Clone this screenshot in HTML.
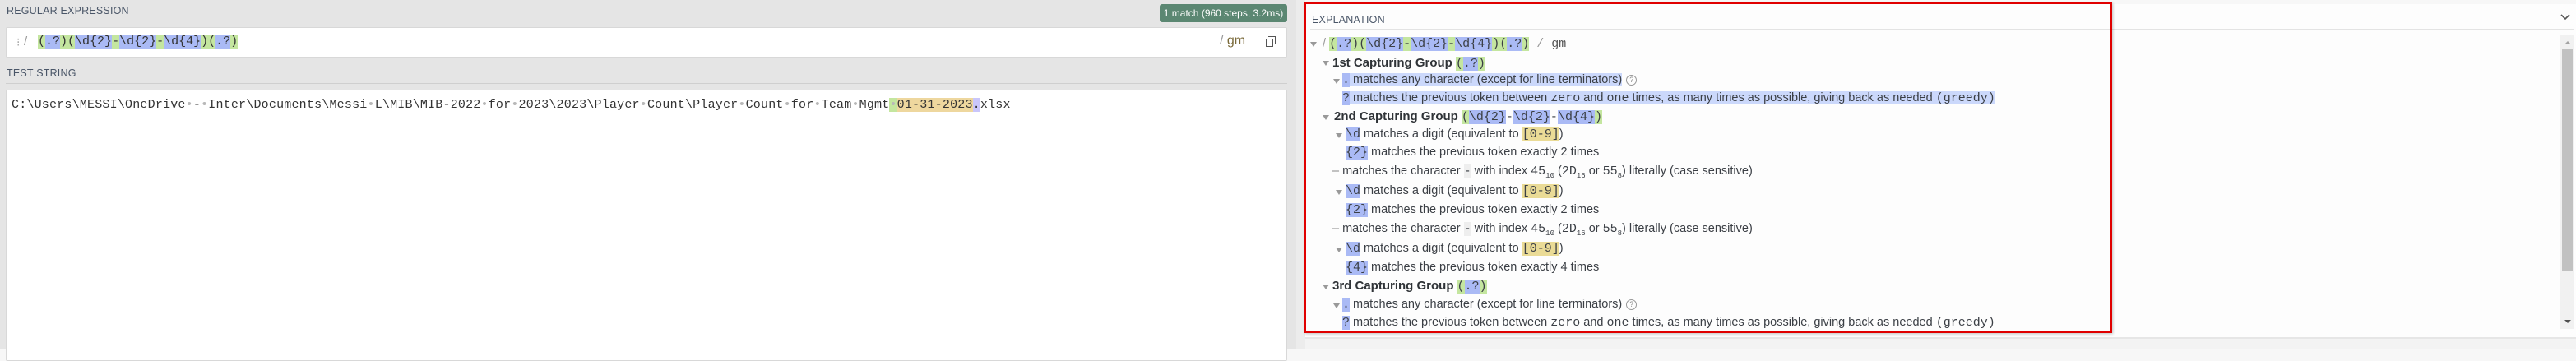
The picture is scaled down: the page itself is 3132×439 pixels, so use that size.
<!DOCTYPE html>
<html><head><meta charset="utf-8"><style>
*{margin:0;padding:0;box-sizing:border-box}
body{width:3132px;height:425px;overflow:hidden;background:#f7f7f7;font-family:"Liberation Sans",sans-serif;position:relative}
.abs{position:absolute}
.mono{font-family:"Liberation Mono",monospace}
.lbl{font-size:12.5px;color:#4a5668;letter-spacing:.2px}
.g{background:#c4e69f}.b{background:#aabaf5}.y{background:#eadb96}.p{background:#c9c6fb}.t{background:#eed79e}
.lb{background:#cbd8fb}
.dot{color:#b8b8b8}
.ex{position:absolute;font-size:14.5px;color:#3b3f45;white-space:nowrap;line-height:21px}
.ex .mono{font-size:15px}
.tri{position:absolute;width:0;height:0;border-left:4px solid transparent;border-right:4px solid transparent;border-top:6px solid #999}
.bold{font-weight:bold;font-size:15px;color:#2f3337}
.q{display:inline-block;width:13px;height:13px;border:1px solid #999;border-radius:50%;font-size:9px;text-align:center;line-height:11px;color:#888;vertical-align:middle;margin-left:5px}
sub{font-size:9px}
</style></head><body>
<div class="abs" style="left:0;top:0;width:1576px;height:425px;background:#e5e5e5"></div>
<div class="abs" style="left:1576px;top:0;width:11px;height:425px;background:#ececec"></div>
<div class="abs lbl" style="left:8px;top:6px">REGULAR EXPRESSION</div>
<div class="abs" style="left:7px;top:25px;width:1395px;height:1px;background:#cfcfcf"></div>
<div class="abs" style="left:1410px;top:5px;width:155px;height:22px;background:#5b8772;border-radius:3px;color:#fff;font-size:12px;line-height:22px;text-align:center">1 match (960 steps, 3.2ms)</div>
<div class="abs" style="left:7px;top:33px;width:1558px;height:37px;background:#fff;border:1px solid #d8d8d8;border-radius:2px"></div>
<div class="abs" style="left:1523px;top:34px;width:1px;height:35px;background:#e2e2e2"></div>
<div class="abs" style="left:20px;top:43px;font-size:14px;color:#aaa">⁝</div>
<div class="abs" style="left:29px;top:42px;font-size:15px;color:#999">/</div>
<div class="abs mono" style="left:46px;top:42px;font-size:15px;color:#333;line-height:18px;white-space:pre"><span class="g">(</span><span class="b">.?</span><span class="g">)(</span><span class="b">\d{2}</span><span class="g">-</span><span class="b">\d{2}</span><span class="g">-</span><span class="b">\d{4}</span><span class="g">)(</span><span class="b">.?</span><span class="g">)</span></div>
<div class="abs" style="left:1483px;top:41px;font-size:16px;color:#999">/ <span style="color:#7a6a3a">gm</span></div>
<div class="abs" style="left:1539px;top:47px;width:9px;height:10px;border:1.5px solid #555;background:#fff"></div>
<div class="abs" style="left:1542px;top:44px;width:9px;height:10px;border:1.5px solid #555;border-left:none;border-bottom:none"></div>
<div class="abs lbl" style="left:8px;top:82px">TEST STRING</div>
<div class="abs" style="left:7px;top:101px;width:1558px;height:1px;background:#cfcfcf"></div>
<div class="abs" style="left:7px;top:109px;width:1558px;height:330px;background:#fff;border:1px solid #d8d8d8;border-radius:2px"></div>
<div class="abs mono" style="left:14px;top:119px;font-size:15px;letter-spacing:.2px;color:#333;line-height:18px;white-space:pre">C:\Users\MESSI\OneDrive<span class="dot">•</span>-<span class="dot">•</span>Inter\Documents\Messi<span class="dot">•</span>L\MIB\MIB-2022<span class="dot">•</span>for<span class="dot">•</span>2023\2023\Player<span class="dot">•</span>Count\Player<span class="dot">•</span>Count<span class="dot">•</span>for<span class="dot">•</span>Team<span class="dot">•</span>Mgmt<span class="g dot">•</span><span class="t">01-31-2023</span><span class="p">.</span>xlsx</div>

<div class="abs" style="left:1587px;top:5px;width:1545px;height:405px;background:#fdfdfd"></div>
<div class="abs lbl" style="left:1595px;top:17px">EXPLANATION</div>
<div class="abs" style="left:1593px;top:35px;width:1537px;height:1px;background:#e3e3e3"></div>
<svg class="abs" style="left:3113px;top:17px" width="12" height="8"><path d="M1 1l5 5 5-5" stroke="#555" stroke-width="1.6" fill="none"/></svg>
<div class="abs" style="left:3113px;top:43px;width:17px;height:357px;background:#f1f1f1"></div>
<div class="abs" style="left:3115px;top:60px;width:13px;height:270px;background:#c1c1c1"></div>
<div class="abs" style="left:3118px;top:50px;border-left:4px solid transparent;border-right:4px solid transparent;border-bottom:4px solid #a3a3a3"></div>
<div class="abs" style="left:3118px;top:389px;border-left:4px solid transparent;border-right:4px solid transparent;border-top:4px solid #505050"></div>
<div class="abs" style="left:1587px;top:410px;width:1545px;height:15px;background:#f3f3f3"></div>
<div class="abs" style="left:1587px;top:410px;width:1545px;height:2px;background:#e6e6e6"></div>

<div class="tri" style="left:1593px;top:51px"></div>
<div class="ex" style="left:1608px;top:43px"><span style="color:#999">/</span> <span class="mono"><span class="g">(</span><span class="b">.?</span><span class="g">)(</span><span class="b">\d{2}</span><span class="g">-</span><span class="b">\d{2}</span><span class="g">-</span><span class="b">\d{4}</span><span class="g">)(</span><span class="b">.?</span><span class="g">)</span> <span style="color:#999">/</span> <span style="color:#555">gm</span></span></div>

<div class="tri" style="left:1608px;top:74px"></div>
<div class="ex" style="left:1620px;top:66px"><span class="bold">1st Capturing Group</span> <span class="mono"><span class="g">(</span><span class="b">.?</span><span class="g">)</span></span></div>
<div class="tri" style="left:1621px;top:96px"></div>
<div class="ex" style="left:1632px;top:87px"><span class="lb"><span class="mono b">.</span> matches any character (except for line terminators)</span><span class="q">?</span></div>
<div class="ex" style="left:1632px;top:109px"><span class="lb"><span class="mono b">?</span> matches the previous token between <span class="mono">zero</span> and <span class="mono">one</span> times, as many times as possible, giving back as needed <span class="mono">(greedy)</span></span></div>

<div class="tri" style="left:1608px;top:140px"></div>
<div class="ex" style="left:1622px;top:131px"><span class="bold">2nd Capturing Group</span> <span class="mono"><span class="g">(</span><span class="b">\d{2}</span>-<span class="b">\d{2}</span>-<span class="b">\d{4}</span><span class="g">)</span></span></div>
<div class="tri" style="left:1624px;top:162px"></div>
<div class="ex" style="left:1636px;top:153px"><span class="mono b">\d</span> matches a digit (equivalent to <span class="mono y">[0-9]</span>)</div>
<div class="ex" style="left:1636px;top:175px"><span class="mono b">{2}</span> matches the previous token exactly 2 times</div>
<div class="ex" style="left:1620px;top:198px"><span style="color:#888">–</span> matches the character <span class="mono" style="background:#eee">-</span> with index <span class="mono">45<sub>10</sub></span> (<span class="mono">2D<sub>16</sub></span> or <span class="mono">55<sub>8</sub></span>) literally (case sensitive)</div>
<div class="tri" style="left:1624px;top:231px"></div>
<div class="ex" style="left:1636px;top:222px"><span class="mono b">\d</span> matches a digit (equivalent to <span class="mono y">[0-9]</span>)</div>
<div class="ex" style="left:1636px;top:245px"><span class="mono b">{2}</span> matches the previous token exactly 2 times</div>
<div class="ex" style="left:1620px;top:268px"><span style="color:#888">–</span> matches the character <span class="mono" style="background:#eee">-</span> with index <span class="mono">45<sub>10</sub></span> (<span class="mono">2D<sub>16</sub></span> or <span class="mono">55<sub>8</sub></span>) literally (case sensitive)</div>
<div class="tri" style="left:1624px;top:301px"></div>
<div class="ex" style="left:1636px;top:292px"><span class="mono b">\d</span> matches a digit (equivalent to <span class="mono y">[0-9]</span>)</div>
<div class="ex" style="left:1636px;top:315px"><span class="mono b">{4}</span> matches the previous token exactly 4 times</div>

<div class="tri" style="left:1608px;top:346px"></div>
<div class="ex" style="left:1620px;top:337px"><span class="bold">3rd Capturing Group</span> <span class="mono"><span class="g">(</span><span class="b">.?</span><span class="g">)</span></span></div>
<div class="tri" style="left:1621px;top:369px"></div>
<div class="ex" style="left:1632px;top:360px"><span class="mono b">.</span> matches any character (except for line terminators)<span class="q">?</span></div>
<div class="ex" style="left:1632px;top:382px"><span class="mono b">?</span> matches the previous token between <span class="mono">zero</span> and <span class="mono">one</span> times, as many times as possible, giving back as needed <span class="mono">(greedy)</span></div>

<div class="abs" style="left:1586px;top:3px;width:982px;height:402px;border:2px solid #e00000;box-shadow:1px 1px 3px rgba(0,0,0,.25)"></div>
</body></html>
